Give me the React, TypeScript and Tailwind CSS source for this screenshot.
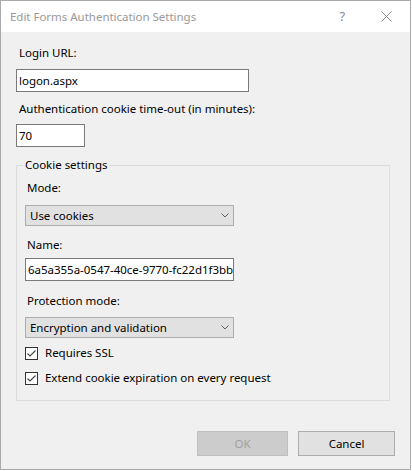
import React from "react";

const font = { fontFamily: '"Noto Sans", "Open Sans", sans-serif' };

function Chevron() {
  return (
    <svg width="8" height="5" viewBox="0 0 8 5" className="shrink-0">
      <polyline points="0.5,0.5 4,4 7.5,0.5" fill="none" stroke="#606060" strokeWidth="1" />
    </svg>
  );
}

function Select({ value }: { value: string }) {
  return (
    <div className="ml-[8px] flex h-[21px] w-[209px] items-center justify-between border border-[#adadad] bg-[#e1e1e1] pl-[4px] pr-[4px] text-black">
      <span>{value}</span>
      <Chevron />
    </div>
  );
}

function Check({ label }: { label: string }) {
  return (
    <div className="ml-[8px] flex h-[16px] items-center gap-[7px] text-black">
      <svg width="13" height="13" viewBox="0 0 13 13" className="shrink-0">
        <rect x="0.5" y="0.5" width="12" height="12" fill="#ffffff" stroke="#333333" />
        <polyline points="2.5,6.5 5,9 10.5,3.5" fill="none" stroke="#444444" strokeWidth="1.1" />
      </svg>
      <span>{label}</span>
    </div>
  );
}

export default function App() {
  return (
    <div className="h-[471px] w-[412px] bg-white text-[11.5px] tracking-[-0.02px]" style={font}>
      <div className="flex h-[470px] w-[411px] flex-col border border-[#a9a9a9] bg-[#f0f0f0]">
        <div className="flex h-[31px] items-center bg-white pl-[9px] text-[#999999]">
          <span className="flex-1">Edit Forms Authentication Settings</span>
          <span className="mr-[36px] text-[13px] text-[#8a8a8a]">?</span>
          <svg width="11" height="11" viewBox="0 0 11 11" className="mr-[18px]">
            <line x1="0.5" y1="0.5" x2="10.5" y2="10.5" stroke="#8a8a8a" strokeWidth="1" />
            <line x1="10.5" y1="0.5" x2="0.5" y2="10.5" stroke="#8a8a8a" strokeWidth="1" />
          </svg>
        </div>
        <div className="flex flex-1 flex-col pl-[15px] pr-[21px] leading-[16px] text-black">
          <div className="mt-[13px] pl-[3px]">Login URL:</div>
          <div className="mt-[8px] flex h-[23px] w-[233px] items-center border border-[#7a7a7a] bg-white pl-[2px]">
            logon.aspx
          </div>
          <div className="mt-[9px] pl-[3px]">Authentication cookie time-out (in minutes):</div>
          <div className="mt-[7px] flex h-[23px] w-[69px] items-center border border-[#7a7a7a] bg-white pl-[2px]">
            70
          </div>
          <fieldset className="mt-[10px] h-[244px] w-[374px] border border-[#dcdcdc] pl-[6px] pr-0 pb-[14px]">
            <legend className="px-[2px] leading-[16px]">Cookie settings</legend>
            <div className="-ml-[6px] flex flex-col">
              <div className="mt-[7px] pl-[10px]">Mode:</div>
              <div className="mt-[9px]">
                <Select value="Use cookies" />
              </div>
              <div className="mt-[11px] pl-[10px]">Name:</div>
              <div className="ml-[8px] mt-[5px] flex h-[23px] w-[209px] items-center overflow-hidden whitespace-nowrap border border-[#7a7a7a] bg-white pl-[2px]">
                6a5a355a-0547-40ce-9770-fc22d1f3bbeb
              </div>
              <div className="mt-[12px] pl-[10px]">Protection mode:</div>
              <div className="mt-[8px]">
                <Select value="Encryption and validation" />
              </div>
              <div className="mt-[7px]">
                <Check label="Requires SSL" />
              </div>
              <div className="mt-[9px]">
                <Check label="Extend cookie expiration on every request" />
              </div>
            </div>
          </fieldset>
          <div className="mt-[30px] flex justify-end gap-[10px]">
            <div className="flex h-[25px] w-[91px] items-center justify-center border border-[#bfbfbf] bg-[#cccccc] text-[#a0a0a0]">
              OK
            </div>
            <div className="mr-[-6px] flex h-[25px] w-[97px] items-center justify-center border border-[#adadad] bg-[#e1e1e1]">
              Cancel
            </div>
          </div>
        </div>
      </div>
    </div>
  );
}
